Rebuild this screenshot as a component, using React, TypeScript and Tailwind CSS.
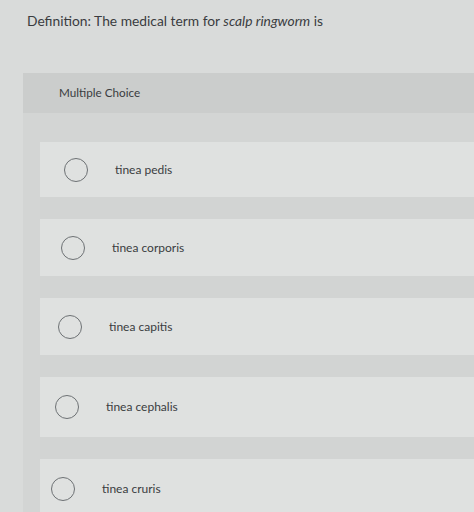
const OPTIONS = [
  { label: "tinea pedis", pad: "pl-[24px]", h: "h-[55px]" },
  { label: "tinea corporis", pad: "pl-[21px]", h: "h-[57px]" },
  { label: "tinea capitis", pad: "pl-[18px]", h: "h-[57px]" },
  { label: "tinea cephalis", pad: "pl-[15px]", h: "h-[60px]" },
  { label: "tinea cruris", pad: "pl-[11px]", h: "h-[60px]" },
];

function Radio() {
  return <span className="block h-[24px] w-[24px] shrink-0 rounded-full border-[1.5px] border-[#6d7174]" />;
}

export default function App() {
  return (
    <div
      className="h-[512px] w-[474px] overflow-hidden bg-[#d9dbda] text-[#3a3c3f]"
      style={{ fontFamily: "Lato, 'Open Sans', sans-serif" }}
    >
      <div className="h-[73px] pl-[27px] pt-[11px] text-[13.8px]">
        Definition: The medical term for <em>scalp ringworm</em> is
      </div>

      <div className="ml-[23px] bg-[#d3d5d4]">
        <div className="flex h-[40px] items-center bg-[#cbcdcc] pl-[36px] text-[11.7px]">Multiple Choice</div>
        <div className="h-[29px]" />
        <div className="pl-[17px]">
          {OPTIONS.map((o, i) => (
            <div key={o.label}>
              {i > 0 && <div className="h-[22px] bg-[#d2d4d3]" />}
              <div className={`flex items-center bg-[#dfe1e0] ${o.h} ${o.pad}`}>
                <Radio />
                <span className="ml-[27px] text-[12px]">{o.label}</span>
              </div>
            </div>
          ))}
        </div>
      </div>
    </div>
  );
}
